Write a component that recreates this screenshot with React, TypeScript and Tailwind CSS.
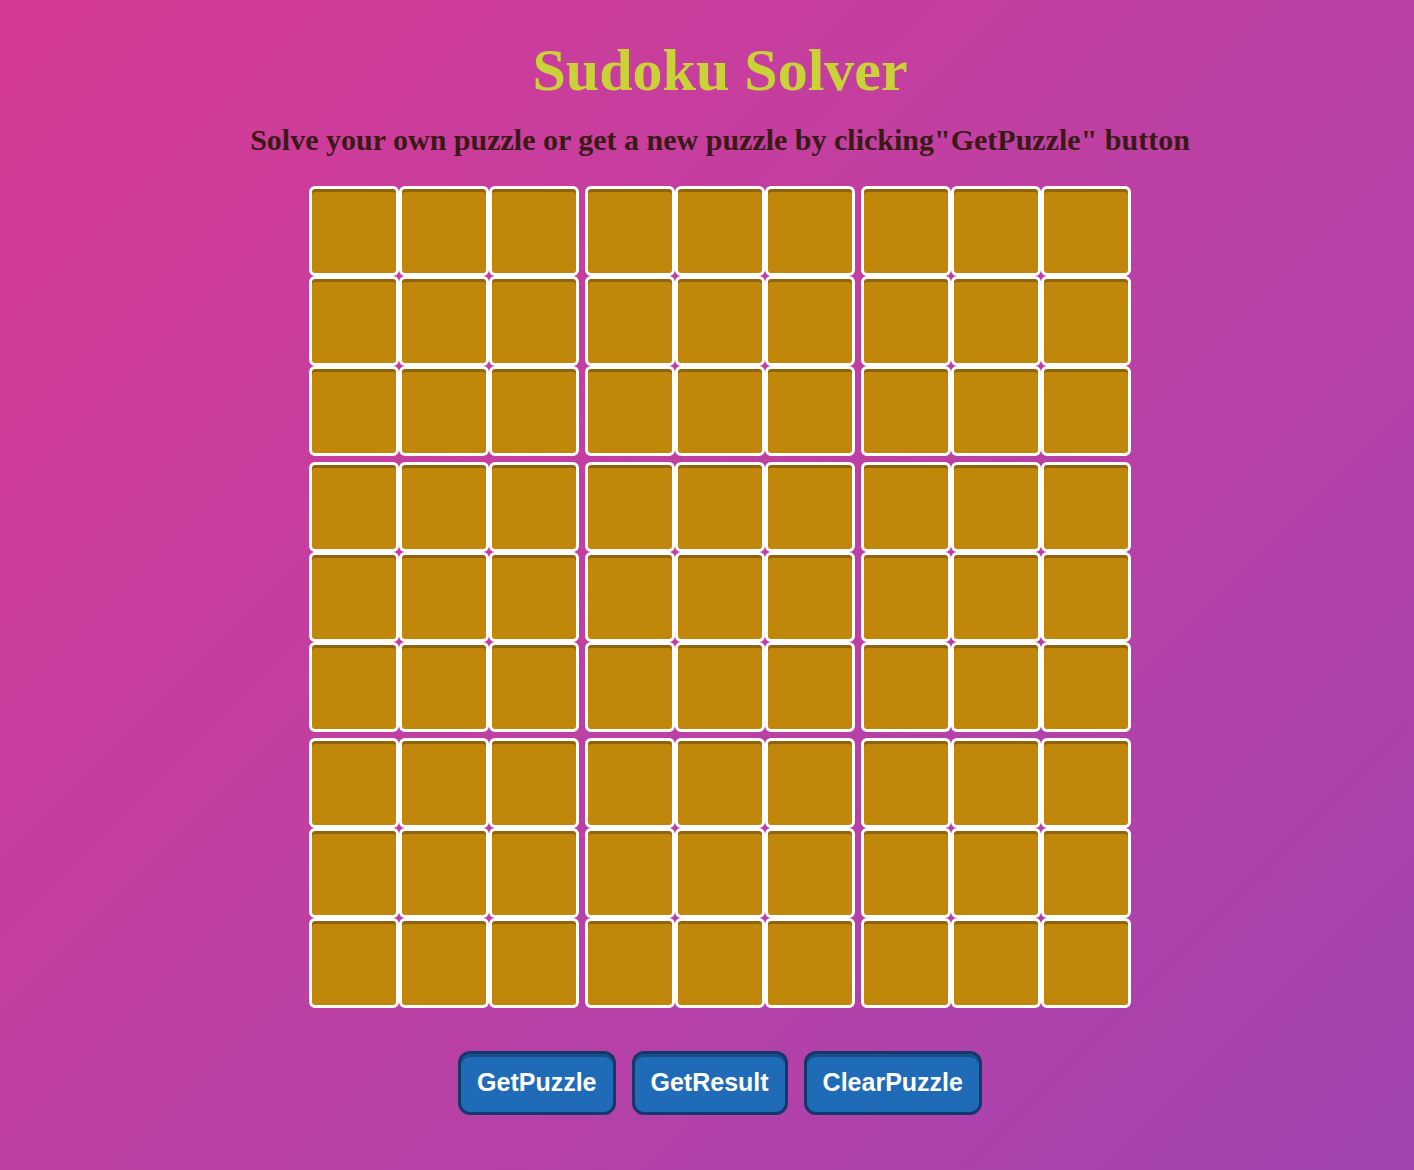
const cells = Array.from({ length: 9 }, (_, i) => i)

const Block = () => {
    return (
        <div className="grid grid-cols-3">
            {cells.map((c) => (
                <input
                    key={c}
                    type="text"
                    maxLength={1}
                    className="w-[90px] h-[90px] bg-[#c1870a] border-[3px] border-white rounded-[6px] shadow-[inset_0_3px_0_#8f6410] text-center text-3xl text-white outline-none"
                />
            ))}
        </div>
    )
}

export default function App() {
    return (
        <main className="w-full min-h-[1170px] bg-[linear-gradient(135deg,#d63a95_0%,#bd40a3_50%,#a244b1_100%)] flex flex-col items-center pl-[26px] pt-[40px]">
            <h1 className="text-[60px] leading-none font-bold text-[#c9d237] font-['Liberation_Serif',serif]">
                Sudoku Solver
            </h1>
            <h2 className="mt-[25px] text-[30px] leading-none font-bold text-[#3b1a16] font-['Liberation_Serif',serif]">
                Solve your own puzzle or get a new puzzle by clicking"GetPuzzle" button
            </h2>
            <div className="mt-[31px] grid grid-cols-3 gap-[6px]">
                {cells.map((b) => (
                    <Block key={b} />
                ))}
            </div>
            <div className="mt-[43px] flex gap-4">
                {["GetPuzzle", "GetResult", "ClearPuzzle"].map((t) => (
                    <button
                        key={t}
                        className="h-16 px-4 rounded-[12px] bg-[#1f6bb8] border-[3px] border-[#15386b] shadow-[inset_0_3px_0_#1b4f8c] text-white text-[25px] font-bold font-['Liberation_Sans',sans-serif]"
                    >
                        {t}
                    </button>
                ))}
            </div>
        </main>
    )
}
